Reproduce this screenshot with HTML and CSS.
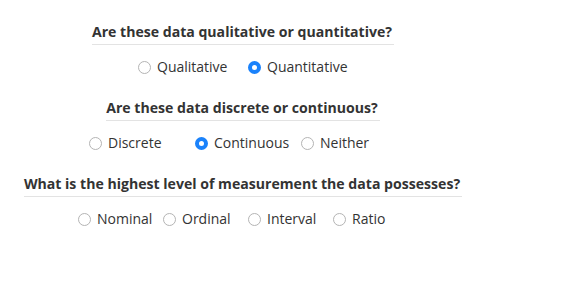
FILE: index.html
```html
<!DOCTYPE html>
<html lang="en-US">
<head>
     <meta charset="UTF-8">
     <meta name="viewport" content="width=device-width, initial-scale=1.0">
     <title>Data questions</title>
     <link rel="stylesheet" href="styles.css">
</head>
<body>
     <div class="quiz">
          <div class="question">
               <div class="title"><span class="heading">Are these data qualitative or quantitative?</span></div>
               <div class="options opts-type">
                    <label class="option"><input type="radio" name="type"> Qualitative</label>
                    <label class="option"><input type="radio" name="type" checked> Quantitative</label>
               </div>
          </div>
          <div class="question">
               <div class="title"><span class="heading">Are these data discrete or continuous?</span></div>
               <div class="options opts-kind">
                    <label class="option"><input type="radio" name="kind"> Discrete</label>
                    <label class="option"><input type="radio" name="kind" checked> Continuous</label>
                    <label class="option"><input type="radio" name="kind"> Neither</label>
               </div>
          </div>
          <div class="question">
               <div class="title"><span class="heading">What is the highest level of measurement the data possesses?</span></div>
               <div class="options opts-level">
                    <label class="option"><input type="radio" name="level"> Nominal</label>
                    <label class="option"><input type="radio" name="level"> Ordinal</label>
                    <label class="option"><input type="radio" name="level"> Interval</label>
                    <label class="option"><input type="radio" name="level"> Ratio</label>
               </div>
          </div>
     </div>
</body>
</html>
```

FILE: styles.css
```css
body {
     margin: 0;
     background: #fff;
     font-family: "Open Sans", "Liberation Sans", sans-serif;
     color: #333;
}

.quiz {
     width: 486px;
     padding-top: 20px;
}

.question {
     margin-bottom: 19px;
}

.title {
     text-align: center;
}

.heading {
     display: inline-block;
     font-size: 14.1px;
     font-weight: bold;
     line-height: 20px;
     padding: 0 2px 2px 0;
     border-bottom: 1px solid #e3e3e3;
}

.options {
     display: flex;
     justify-content: center;
     margin-top: 12px;
     font-size: 14px;
     line-height: 20px;
}

.option {
     display: flex;
     align-items: center;
     padding-left: 5px;
     box-sizing: border-box;
     cursor: pointer;
}

.opts-type .option {
     width: 110px;
}

.opts-kind .option {
     width: 106px;
}

.opts-level .option {
     width: 85px;
}

.option input {
     appearance: none;
     -webkit-appearance: none;
     width: 13px;
     height: 13px;
     margin: 0 6px 0 0;
     border: 1px solid #b4b4b4;
     border-radius: 50%;
     background: #fff;
     box-sizing: border-box;
}

.option input:checked {
     border: 4.5px solid #1a82fb;
     background: #fff;
}
```
